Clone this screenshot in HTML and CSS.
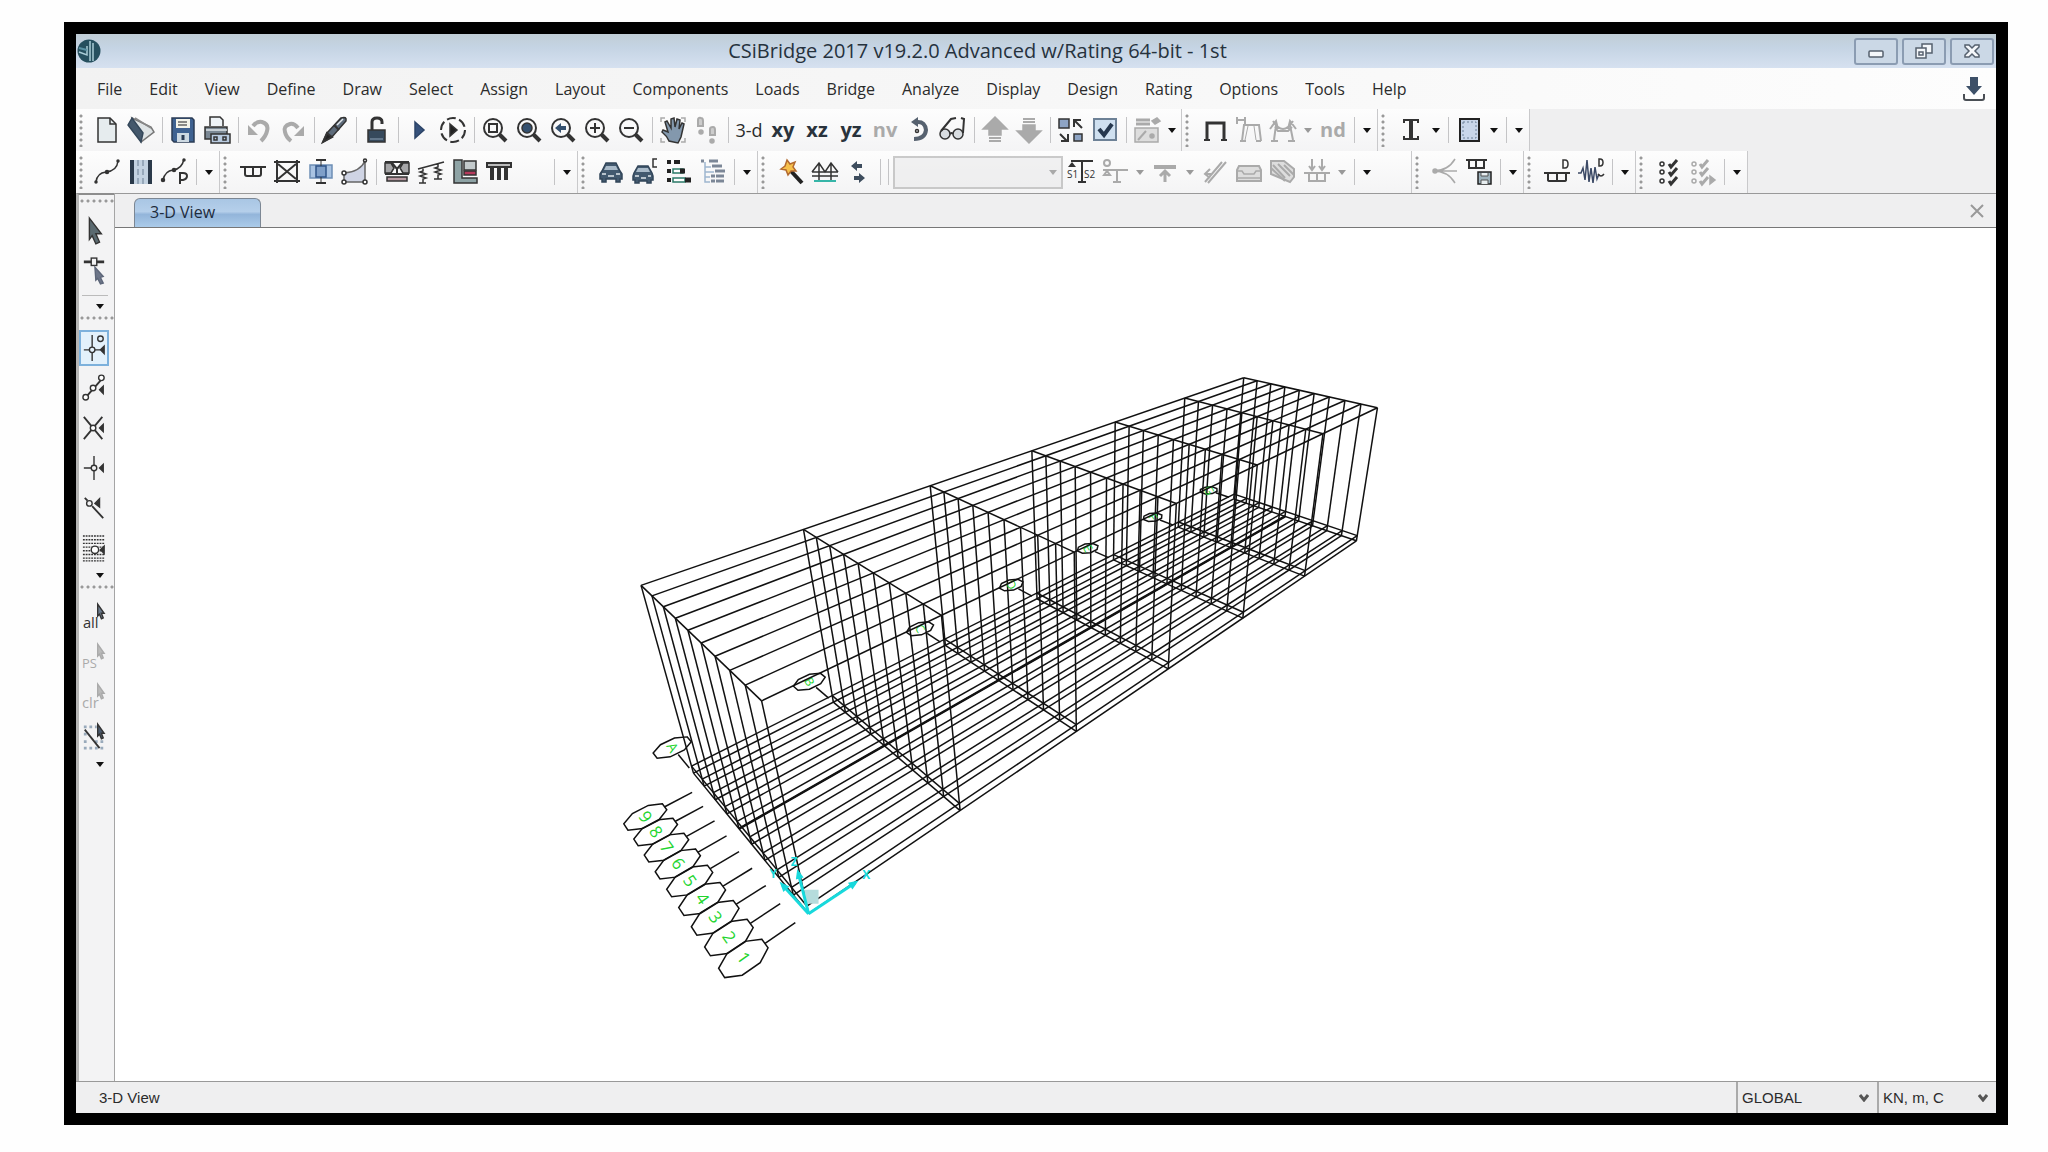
FILE: index.html
```html
<!DOCTYPE html>
<html lang="en">
<head>
	<meta charset="utf-8">
	<title>CSiBridge 2017 v19.2.0 Advanced w/Rating 64-bit - 1st</title>
	<link rel="stylesheet" href="styles.css">
</head>
<body>
<div class="window">
	<header class="titlebar">
		<svg class="app-icon" viewBox="0 0 24 24"><circle cx="12" cy="12" r="11.5" fill="#26505f"/><path d="M2 13l8 3V7M13 2v20M16 4v18" stroke="#a9ccd6" stroke-width="1.5" fill="none"/><path d="M2 9l8 2" stroke="#5b93a5" stroke-width="2"/></svg>
		<h1>CSiBridge 2017 v19.2.0 Advanced w/Rating 64-bit - 1st</h1>
		<div class="window-buttons">
			<button aria-label="Minimize"><svg viewBox="0 0 20 16"><rect x="3" y="8" width="14" height="6" rx="1"/></svg></button>
			<button aria-label="Restore"><svg viewBox="0 0 20 16"><rect x="8" y="1" width="10" height="9"/><rect x="2" y="5" width="10" height="10"/><rect x="5" y="9" width="4" height="3"/></svg></button>
			<button aria-label="Close"><svg viewBox="0 0 20 16"><path d="M3 2h4l3 3 3-3h4v2l-4 4 4 4v2h-4l-3-3-3 3H3v-2l4-4-4-4z"/></svg></button>
		</div>
	</header>

	<nav class="menubar">
		<a href="#">File</a>
		<a href="#">Edit</a>
		<a href="#">View</a>
		<a href="#">Define</a>
		<a href="#">Draw</a>
		<a href="#">Select</a>
		<a href="#">Assign</a>
		<a href="#">Layout</a>
		<a href="#">Components</a>
		<a href="#">Loads</a>
		<a href="#">Bridge</a>
		<a href="#">Analyze</a>
		<a href="#">Display</a>
		<a href="#">Design</a>
		<a href="#">Rating</a>
		<a href="#">Options</a>
		<a href="#">Tools</a>
		<a href="#">Help</a>
		<button class="download" aria-label="Download update"><svg viewBox="0 0 24 26"><path d="M8 1h8v9h4l-8 9-8-9h4z" fill="#3d5068"/><path d="M2 18v4q0 2 2 2h16q2 0 2-2v-4" fill="none" stroke="#4a4f55" stroke-width="2"/></svg></button>
	</nav>

	<div class="toolbar">
		<div class="group">
			<span class="grip"></span>
			<button class="tool" aria-label="New"><svg viewBox="0 0 26 26"><path d="M4 1h12l6 6v18H4z" fill="#e6ecee"/><path d="M16 1v6h6"/></svg></button>
			<button class="tool" aria-label="Open"><svg viewBox="0 0 26 26"><path d="M4 1l19 9 3 5-13 10z" fill="#dfe4e6" stroke="#777"/><path d="M0 8l4-7 11 15-2 9z" fill="#44586c" stroke="#34475a"/><path d="M7 1l16 10" stroke="#888"/></svg></button>
			<span class="sep"></span>
			<button class="tool" aria-label="Save"><svg viewBox="0 0 26 26"><path d="M2 1h20l2 2v22H4l-2-2z" fill="#3f6291" stroke="#2b3c55"/><path d="M6 2h14v9H6z" fill="#f4f4ea" stroke="none"/><path d="M8 5h9M8 8h9" stroke="#666"/><path d="M7 16h12v9H7z" fill="#cdd9e2" stroke="none"/><path d="M13 18v5" stroke="#2b3c55" stroke-width="3"/></svg></button>
			<button class="tool" aria-label="Print"><svg viewBox="0 0 26 26"><path d="M6 9V0h10l3 3v6" fill="#eef3f7"/><path d="M1 10h22v12H1z" fill="#7b8894"/><path d="M2 13h21" stroke="#dfe6ea"/><rect x="7" y="17" width="19" height="9" fill="#b9cbe0"/><rect x="10" y="20" width="3" height="3"/><rect x="19" y="20" width="3" height="3"/></svg></button>
			<span class="sep"></span>
			<button class="tool off" aria-label="Undo"><svg viewBox="0 0 26 26"><path d="M7 9q4-5 9-4 7 2 5 9-1 5-6 10" stroke-width="4"/><path d="M2 8v10h10z" fill="#aaa" stroke="none"/></svg></button>
			<button class="tool off" aria-label="Redo"><svg viewBox="0 0 26 26"><path d="M18 11q-4-5-8-4-7 2-5 8 1 5 6 9" stroke-width="4"/><path d="M24 9v10H14z" fill="#aaa" stroke="none"/></svg></button>
			<span class="sep"></span>
			<button class="tool" aria-label="Refresh"><svg viewBox="0 0 26 26"><path d="M1 25l4-9L19 1q6-2 5 3L10 20z" fill="#5d6b7a"/><path d="M1 25l4-9 5 4zM12 8l5 5" fill="#222" stroke-width="2"/><path d="M15 8l6-6" stroke="#e3e8ec"/></svg></button>
			<span class="sep"></span>
			<button class="tool" aria-label="Unlock model"><svg viewBox="0 0 26 26"><path d="M8 13V5q0-4 5-4t5 4v2" stroke-width="3"/><rect x="4" y="13" width="17" height="12" fill="#36495c"/><path d="M6 22h13" stroke="#72869a"/></svg></button>
			<span class="sep"></span>
			<button class="tool" aria-label="Run"><svg viewBox="0 0 26 26"><path d="M9 5l9 8-9 8z" fill="#36517b" stroke="#2c4468"/></svg></button>
			<button class="tool" aria-label="Run model alive"><svg viewBox="0 0 26 26"><circle cx="13" cy="13" r="12" stroke-width="2" stroke-dasharray="9 3.5"/><path d="M10 7l7 6-7 6z" fill="#222"/></svg></button>
			<span class="sep"></span>
			<button class="tool" aria-label="Rubber band zoom"><svg viewBox="0 0 26 26"><circle cx="11" cy="11" r="9" stroke-width="2"/><path d="M17 17l7 7" stroke-width="4"/><rect x="7" y="7" width="8" height="8" stroke-width="2"/></svg></button>
			<button class="tool" aria-label="Zoom to full"><svg viewBox="0 0 26 26"><circle cx="11" cy="11" r="9" stroke-width="2"/><path d="M17 17l7 7" stroke-width="4"/><circle cx="11" cy="11" r="5" fill="#34506f"/></svg></button>
			<button class="tool" aria-label="Previous zoom"><svg viewBox="0 0 26 26"><circle cx="11" cy="11" r="9" stroke-width="2"/><path d="M17 17l7 7" stroke-width="4"/><path d="M5 11l6-5v3h5v4h-5v3z" fill="#34506f" stroke="none"/></svg></button>
			<button class="tool" aria-label="Zoom in"><svg viewBox="0 0 26 26"><circle cx="11" cy="11" r="9" stroke-width="2"/><path d="M17 17l7 7" stroke-width="4"/><path d="M6 11h10M11 6v10" stroke-width="2"/></svg></button>
			<button class="tool" aria-label="Zoom out"><svg viewBox="0 0 26 26"><circle cx="11" cy="11" r="9" stroke-width="2"/><path d="M17 17l7 7" stroke-width="4"/><path d="M6 11h10" stroke-width="2"/></svg></button>
			<span class="sep"></span>
			<button class="tool" aria-label="Pan"><svg viewBox="0 0 26 26"><path d="M1 5V1h4M21 1h4v4M25 21v4h-4M5 25H1v-4" stroke="#aaa"/><path d="M9 24q-2-5-7-9l1-2 5 2L5 5l2-1 4 7V2l3-1 1 9 2-8 3 1-1 9 3-6 2 1-3 13-3 6z" fill="#8398ad"/></svg></button>
			<button class="tool off" aria-label="Walk"><svg viewBox="0 0 26 26"><path d="M4 9V3q0-3 3-2 2 0 2 3v5H4zM16 18v-6q0-2 3-2 2 0 2 3v5h-5z" fill="#ccc" stroke-width="2"/><circle cx="7" cy="15" r="2" fill="#aaa"/><circle cx="18" cy="24" r="2" fill="#aaa"/></svg></button>
			<span class="sep"></span>
			<button class="tool plain">3-d</button>
			<button class="tool word">xy</button>
			<button class="tool word">xz</button>
			<button class="tool word">yz</button>
			<button class="tool word off">nv</button>
			<button class="tool" aria-label="Rotate view"><svg viewBox="0 0 26 26"><path d="M10 5q9-1 10 8-1 9-12 9" stroke="#56616f" stroke-width="4"/><path d="M12 0v10L5 5z" fill="#56616f" stroke="none"/><circle cx="11" cy="14" r="1.500"/></svg></button>
			<button class="tool" aria-label="Perspective"><svg viewBox="0 0 26 26"><circle cx="5" cy="17" r="5" fill="#d9dde1"/><circle cx="18" cy="17" r="5" fill="#d9dde1"/><path d="M10 17q2-2 3 0M1 14L11 2l5-1M23 16l1-14-3-1" stroke-width="2"/></svg></button>
			<span class="sep"></span>
			<button class="tool off" aria-label="Move up"><svg viewBox="0 0 26 26"><path d="M13 0l12 12h-6v6H7v-6H1z" fill="#aaa"/><path d="M7 21h12M7 24h12" stroke-width="2"/></svg></button>
			<button class="tool off" aria-label="Move down"><svg viewBox="0 0 26 26"><path d="M13 26L1 14h6V8h12v6h6z" fill="#aaa"/><path d="M7 2h12M7 5h12" stroke-width="2"/></svg></button>
			<span class="sep"></span>
			<button class="tool" aria-label="Shrink objects"><svg viewBox="0 0 26 26"><rect x="1" y="2" width="10" height="9" fill="#8ea4c4"/><path d="M15 3h8M16 3v7M16 3l8 8" stroke-width="2"/><path d="M2 17l7 7M10 17v7H3" stroke-width="2"/><rect x="16" y="17" width="8" height="7" fill="#8ea4c4"/></svg></button>
			<button class="tool" aria-label="Display options"><svg viewBox="0 0 26 26"><rect x="2" y="2" width="22" height="21" fill="#cfe0f0" stroke="#6d8196" stroke-width="2"/><path d="M7 12l5 6 8-11" stroke-width="4" stroke="#26384e"/></svg></button>
			<span class="sep"></span>
			<button class="tool off" aria-label="Assign display"><svg viewBox="0 0 26 26"><path d="M2 3h14M2 7h14" stroke-width="3"/><path d="M1 11h23v14H1z" fill="#ddd"/><path d="M4 23l8-9" stroke-width="2"/><circle cx="18" cy="19" r="2" fill="#aaa"/><path d="M18 4l5-3 3 3-5 3z" fill="#aaa"/></svg></button>
			<button class="arrow attached" aria-label="More display"></button>
		</div>
		<div class="group">
			<span class="grip"></span>
			<button class="tool" aria-label="Frame"><svg viewBox="0 0 26 26"><path d="M5 22V6h17v16" stroke-width="3"/><path d="M2 23h6M19 23h6" stroke-width="2"/></svg></button>
			<button class="tool off" aria-label="Frame span"><svg viewBox="0 0 26 26"><path d="M1 0v7M9 0v7M1 3h8M6 24L8 8h15l2 16M4 24h6M20 24h5" stroke-width="2"/><path d="M9 23l3-14M20 23L18 9" stroke-width="1"/></svg></button>
			<button class="tool off" aria-label="Deformed shape"><svg viewBox="0 0 26 26"><path d="M3 4q10 16 20 0M5 10l3 4h10l4-4M0 12l6-8 2 8M26 12l-6-8-2 8M6 8L4 23M20 8l3 15M1 24h7M18 24h7" stroke-width="2"/></svg></button>
			<button class="arrow attached off" aria-label="More shapes"></button>
			<button class="tool word off">nd</button>
			<span class="sep"></span>
			<button class="arrow" aria-label="More views"></button>
		</div>
		<div class="group">
			<span class="grip"></span>
			<button class="tool" aria-label="Frame section"><svg viewBox="0 0 26 26"><path d="M5 3h16M5 22h16M6 3v3M20 3v3M6 22v-3M20 22v-3" stroke-width="2"/><path d="M13 3v19" stroke-width="4"/></svg></button>
			<button class="arrow attached" aria-label="More sections"></button>
			<span class="sep"></span>
			<button class="tool" aria-label="Area section"><svg viewBox="0 0 26 26"><rect x="4" y="2" width="19" height="22" fill="#c9d6ea" stroke="#222" stroke-width="2"/><path d="M7 5h13v16H7z" stroke="#6d8098" stroke-width="1" stroke-dasharray="2 2"/></svg></button>
			<button class="arrow attached" aria-label="More areas"></button>
			<span class="sep"></span>
			<button class="arrow" aria-label="Toolbar options"></button>
		</div>
	</div>

	<div class="toolbar">
		<div class="group">
			<span class="grip"></span>
			<button class="tool" aria-label="Layout line"><svg viewBox="0 0 26 26"><path d="M2 23Q3 14 12 13q11-1 12-11"/><circle cx="2" cy="23" r="1" fill="#333"/><circle cx="13" cy="13" r="1.500" fill="#333"/><circle cx="24" cy="2" r="1" fill="#333"/></svg></button>
			<button class="tool" aria-label="Lanes"><svg viewBox="0 0 26 26"><path d="M3 1h20v24H3z" fill="#c3d2e0" stroke="none"/><path d="M4 1v24M22 1v24" stroke="#2b3a4a" stroke-width="4"/><path d="M10 1v24M15 1v24" stroke="#6b7f93" stroke-width="1" stroke-dasharray="6 3"/></svg></button>
			<button class="tool" aria-label="Layout parameters"><svg viewBox="0 0 26 26"><path d="M1 21Q3 12 11 11q9-1 11-11"/><circle cx="1" cy="21" r="1.500" fill="#333"/><circle cx="12" cy="11" r="1.500" fill="#333"/><circle cx="22" cy="1" r="1" fill="#333"/><path d="M18 25V14h3q4 0 4 3t-4 4h-3" stroke-width="2"/></svg></button>
			<span class="sep"></span>
			<button class="arrow" aria-label="More layout"></button>
		</div>
		<div class="group">
			<span class="grip"></span>
			<button class="tool" aria-label="Deck section"><svg viewBox="0 0 26 26"><path d="M0 8h26M5 9v6q0 2 2 2h12q2 0 2-2V9M13 9v8" stroke-width="2"/></svg></button>
			<button class="tool" aria-label="Diaphragm"><svg viewBox="0 0 26 26"><path d="M0 3h26M0 22h26M3 1v23M23 1v23M4 5l18 15M22 5L4 20" stroke-width="2"/></svg></button>
			<button class="tool" aria-label="Hinge"><svg viewBox="0 0 26 26"><path d="M2 6h22v13H2z" fill="#a9c3e2" stroke="#6d8fb5"/><rect x="8" y="7" width="10" height="11" fill="#7f9fc8" stroke="#2f5488"/><path d="M8 1h10M8 24h10" stroke-width="2"/><path d="M13 1v6M13 18v6" stroke-width="1"/></svg></button>
			<button class="tool" aria-label="Parametric variation"><svg viewBox="0 0 26 26"><path d="M2 14q16-1 21-12v21H2z" fill="#cfd4e4" stroke="#666"/><circle cx="2" cy="14" r="2" fill="#fff"/><circle cx="23" cy="1.500" r="1.500" fill="#fff"/><circle cx="2" cy="23" r="2" fill="#fff"/><circle cx="23" cy="23" r="2" fill="#fff"/></svg></button>
			<span class="sep"></span>
			<button class="tool" aria-label="Bearing"><svg viewBox="0 0 26 26"><path d="M1 4h6l3 5-3 5H1zM25 4h-6l-3 5 3 5h6z" fill="#a6a6a8"/><path d="M1 3h24M1 15h24M8 4l5 6 5-6M13 10v5" stroke-width="2"/><rect x="3" y="18" width="20" height="4" fill="#b99aa2"/></svg></button>
			<button class="tool" aria-label="Spring supports"><svg viewBox="0 0 26 26"><path d="M0 10L26 3M5 9v3l-3 1 6 2-6 2 6 2-3 1v4M20 5v3l-3 1 6 2-6 2 6 2-3 1v4M1 24h7M16 20h8"/></svg></button>
			<button class="tool" aria-label="Abutment"><svg viewBox="0 0 26 26"><path d="M2 1h8v18h15v5H2z" fill="#8ea3a5"/><path d="M12 2h12v9H12z" fill="#c3cacc"/><path d="M12 12h12v4H12z" fill="#b73a5c"/></svg></button>
			<button class="tool" aria-label="Bent"><svg viewBox="0 0 26 26"><path d="M1 4h24v4H1z" fill="#bbb" stroke-width="2"/><path d="M6 8v13M13 8v13M20 8v13" stroke-width="4"/></svg></button>
			<span class="spacer"></span>
			<span class="sep"></span>
			<button class="arrow" aria-label="More components"></button>
		</div>
		<div class="group">
			<span class="grip"></span>
			<button class="tool" aria-label="Vehicles"><svg viewBox="0 0 26 26"><path d="M8 4h10l4 8 2 3v5h-2v3h-4v-3H8v3H4v-3H2v-5l2-3z" fill="#42596f" stroke="#32465a"/><path d="M8 7h10l2 4H6z" fill="#a9bac9" stroke="none"/><path d="M4 15h4M18 15h4M10 17h6" stroke="#dfe6ec"/></svg></button>
			<button class="tool" aria-label="Vehicle classes"><svg viewBox="0 0 26 26"><path d="M6 7h10l4 7 1 3v4h-2v3h-4v-2H7v2H3v-3H1v-4l1-3z" fill="#42596f" stroke="#32465a"/><path d="M6 9h10l2 4H4z" fill="#a9bac9" stroke="none"/><path d="M3 17h4M16 17h3M9 19h5" stroke="#dfe6ec"/><path d="M25 0h-4v8h4"/></svg></button>
			<button class="tool" aria-label="Load patterns"><svg viewBox="0 0 26 26"><path d="M1 3h4M8 3h6M1 12h4M1 21h4" stroke="#222" stroke-width="4"/><path d="M7 10h10v4H7zM7 19h12v4H7z" fill="#fff" stroke="#2b7a68"/><path d="M14 12h5M19 21h6" stroke="#222" stroke-width="5"/></svg></button>
			<button class="tool" aria-label="Load cases"><svg viewBox="0 0 26 26"><path d="M1 2h3M9 2h9M12 7h10M15 12h10M11 17h4M16 17h8M11 22h4M16 22h8" stroke="#7c8797" stroke-width="3"/><path d="M5 3v20h5M5 8h6M5 13h9M5 18h5" stroke="#9fb6d0"/></svg></button>
			<span class="sep"></span>
			<button class="arrow" aria-label="More loads"></button>
		</div>
		<div class="group">
			<span class="grip"></span>
			<button class="tool" aria-label="Bridge wizard"><svg viewBox="0 0 26 26"><path d="M12 11l12 13" stroke="#222" stroke-width="4"/><path d="M9 1l3 4 5-2-2 5 3 4-5 0-3 4-2-5-5-1 4-3z" fill="#f6c04b" stroke="#b36a2f"/></svg></button>
			<button class="tool" aria-label="Bridge object"><svg viewBox="0 0 26 26"><path d="M0 13h26M0 17h26M7 4v18M19 4v18M0 13L7 4l6 9 6-9 7 9"/><path d="M2 22h22" stroke="#36b5a8" stroke-width="2"/></svg></button>
			<button class="tool" aria-label="Update linked model"><svg viewBox="0 0 26 26"><path d="M5 7l6-5v3h5v4h-5v3zM19 19l-6-5v3H8v4h5v3z" fill="#3e4d5e" stroke="none"/></svg></button>
			<span class="sep"></span>
			<span class="sep"></span>
			<select class="object-select" aria-label="Bridge object" disabled><option></option></select>
			<button class="tool" aria-label="Spans"><svg viewBox="0 0 26 26"><path d="M3 2h22M14 2v21M10 23h8" stroke-width="2"/><path d="M0 8l4-5 4 5z" fill="#333" stroke="none"/><text x="-1" y="19" font-size="10">S1</text><text x="16" y="19" font-size="10">S2</text></svg></button>
			<button class="tool off" aria-label="Supports"><svg viewBox="0 0 26 26"><circle cx="5" cy="4" r="3" stroke-width="2"/><path d="M1 11h25M15 11v12M11 23h8M2 16l3-4 3 4z" stroke-width="2"/></svg></button>
			<button class="arrow attached off" aria-label="More supports"></button>
			<button class="tool off" aria-label="Superelevation"><svg viewBox="0 0 26 26"><path d="M2 8h22" stroke-width="4"/><path d="M13 23V12M8 17l5-5 5 5" stroke-width="3"/></svg></button>
			<button class="arrow attached off" aria-label="More elevation"></button>
			<button class="tool off" aria-label="Prestress"><svg viewBox="0 0 26 26"><path d="M3 23L20 3M6 24L24 3M3 15h6M8 10l-5 5 5 4" stroke-width="2"/></svg></button>
			<button class="tool off" aria-label="Girder rebar"><svg viewBox="0 0 26 26"><path d="M3 7h20l2 4v11H1V11z" fill="#ddd" stroke-width="2"/><path d="M1 12h5l2 3h10l2-3h5M2 19h22"/></svg></button>
			<button class="tool off" aria-label="Point loads"><svg viewBox="0 0 26 26"><path d="M1 2h13l10 8v8l-4 5L1 15z" fill="#ddd" stroke-width="2"/><path d="M3 6l12 13M8 5l12 12M14 6l10 10M1 9l14 13" stroke-width="2"/></svg></button>
			<button class="tool off" aria-label="Line loads"><svg viewBox="0 0 26 26"><path d="M8 0v10M18 0v10M5 7l3 4 3-4M15 7l3 4 3-4M0 14h26M5 15v7h16v-7M13 15v7" stroke-width="2"/></svg></button>
			<button class="arrow attached off" aria-label="More line loads"></button>
			<span class="sep"></span>
			<button class="arrow" aria-label="More bridge"></button>
			<span class="spacer"></span>
		</div>
		<div class="group">
			<span class="grip"></span>
			<button class="tool off" aria-label="Influence lines"><svg viewBox="0 0 26 26"><path d="M1 12h24M1 12Q16 12 23 0M1 12Q16 12 23 24"/><circle cx="3" cy="12" r="2" fill="#aaa"/></svg></button>
			<button class="tool" aria-label="Save bridge forces"><svg viewBox="0 0 26 26"><path d="M0 1h21M3 2v7h15V2M10 2v7" stroke-width="2"/><rect x="12" y="13" width="13" height="12" fill="#9fb3bd" stroke="#222"/><path d="M15 14v3h7v-3M15 25v-4h7v4" fill="#e8eef0" stroke="#555" stroke-width="1"/></svg></button>
			<span class="sep"></span>
			<button class="arrow" aria-label="More analysis"></button>
		</div>
		<div class="group">
			<span class="grip"></span>
			<button class="tool" aria-label="Deck design"><svg viewBox="0 0 26 26"><path d="M0 14h26M4 15v6q0 1 2 1h14q2 0 2-1v-6M13 15v7" stroke-width="2"/><path d="M19 1v8h2q3 0 3-4t-3-4z"/></svg></button>
			<button class="tool" aria-label="Seismic design"><svg viewBox="0 0 26 26"><path d="M0 14h3l2-5 2 12L9 1l2 22 2-14 2 15 2-16 2 12 2-5" stroke="#3c4a66"/><path d="M21 0v7h1q3 0 3-3.500t-3-3.500zM20 15q3 4 6 0"/></svg></button>
			<span class="sep"></span>
			<button class="arrow" aria-label="More design"></button>
		</div>
		<div class="group">
			<span class="grip"></span>
			<button class="tool" aria-label="Load rating"><svg viewBox="0 0 26 26"><circle cx="6" cy="5" r="2"/><circle cx="6" cy="13" r="2"/><circle cx="6" cy="22" r="2"/><path d="M13 5l2 3 6-7M13 13l2 3 6-7M13 22l2 3 6-7" stroke-width="3"/></svg></button>
			<button class="tool off" aria-label="Run load rating"><svg viewBox="0 0 26 26"><circle cx="4" cy="5" r="2"/><circle cx="4" cy="13" r="2"/><circle cx="4" cy="22" r="2"/><path d="M10 5l2 3 6-7M10 13l2 3 6-7M10 22l2 3 6-7" stroke-width="3"/><path d="M20 17l5 4-5 4z" fill="#aaa"/></svg></button>
			<span class="sep"></span>
			<button class="arrow" aria-label="More rating"></button>
		</div>
	</div>

	<div class="workspace">
		<aside class="sidebar">
			<span class="grip"></span>
			<button class="tool" aria-label="Select"><svg viewBox="0 0 26 30"><path d="M8 1l13 17-6 0 4 9-4 2-4-9-3 4z" fill="#5b6a70"/></svg></button>
			<button class="tool" aria-label="Reshape"><svg viewBox="0 0 26 30"><path d="M2 5h8M16 5h8" stroke-width="3"/><rect x="10" y="1" width="6" height="8"/><path d="M14 11l9 10-3 1 3 6-3 1-3-6-2 2z" fill="#6d7689" stroke="#5d6679"/></svg></button>
			<span class="rule"></span>
			<button class="arrow" aria-label="More pointers"></button>
			<span class="grip"></span>
			<button class="tool active" aria-label="Snap to points"><svg viewBox="0 0 26 30"><path d="M11 1v13M11 20v9M2 17h6M14 17h6"/><circle cx="11" cy="17" r="3"/><circle cx="20" cy="5" r="3"/><path d="M24 13v8l-4-4z" fill="#333"/></svg></button>
			<button class="tool" aria-label="Snap to midpoints"><svg viewBox="0 0 26 30"><path d="M5 24l15-17" stroke-width="2"/><circle cx="4" cy="25" r="3" fill="#fff"/><circle cx="12" cy="15" r="3" fill="#fff"/><circle cx="21" cy="4" r="3" fill="#fff"/><path d="M23 13v8l-4-4z" fill="#333"/></svg></button>
			<button class="tool" aria-label="Snap to intersections"><svg viewBox="0 0 26 30"><path d="M2 3l20 24M22 3L2 27" stroke-width="2"/><circle cx="12" cy="15" r="3" fill="#fff"/><path d="M23 11v8l-4-4z" fill="#333"/></svg></button>
			<button class="tool" aria-label="Snap to perpendicular"><svg viewBox="0 0 26 30"><path d="M13 2v10M13 18v10M2 15h8"/><circle cx="13" cy="15" r="3"/><path d="M23 11v8l-4-4z" fill="#333"/></svg></button>
			<button class="tool" aria-label="Snap to lines"><svg viewBox="0 0 26 30"><path d="M11 13l12 13M3 4l3 3" stroke-width="2"/><circle cx="8" cy="10" r="3"/><path d="M19 5v9l-5-4z" fill="#333"/></svg></button>
			<button class="tool" aria-label="Snap to fine grid"><svg viewBox="0 0 26 30"><path d="M1 2h23M1 6h23M1 10h23M1 14h23M1 18h23M1 22h23M1 26h23M1 29h23" stroke-dasharray="2 1"/><circle cx="14" cy="17" r="4" fill="#fff"/><path d="M24 13v8l-4-4z" fill="#333"/></svg></button>
			<button class="arrow" aria-label="More snaps"></button>
			<span class="grip"></span>
			<button class="tool" aria-label="Select all"><svg viewBox="0 0 26 30"><text x="1" y="27" font-size="16">all</text><path d="M17 1l7 10h-3l2 5-2 1-2-5-2 2z" fill="#6d7c8e"/></svg></button>
			<button class="tool off" aria-label="Previous selection"><svg viewBox="0 0 26 30"><text x="0" y="27" font-size="14">PS</text><path d="M17 1l7 10h-3l2 5-2 1-2-5-2 2z" fill="#bbb"/></svg></button>
			<button class="tool off" aria-label="Clear selection"><svg viewBox="0 0 26 30"><text x="0" y="27" font-size="16">clr</text><path d="M17 1l7 10h-3l2 5-2 1-2-5-2 2z" fill="#bbb"/></svg></button>
			<button class="tool" aria-label="Intersecting line select"><svg viewBox="0 0 26 30"><path d="M2 4h14M2 12h6M14 20h10M2 20h5M2 27h22" stroke="#9ab" stroke-width="3" stroke-dasharray="3 3"/><path d="M3 7l16 20" stroke-width="2"/><path d="M17 1l7 10h-3l2 5-2 1-2-5-2 2z" fill="#4c5b6e"/></svg></button>
			<button class="arrow" aria-label="More selection"></button>
		</aside>
		<main class="document">
			<div class="tabs">
				<button class="tab">3-D View</button>
				<button class="close" aria-label="Close view"><svg viewBox="0 0 14 14"><path d="M1 1l12 12M13 1L1 13"/></svg></button>
			</div>
			<svg id="model" class="model" viewBox="0 0 1883 853"></svg>
		</main>
	</div>

	<footer class="statusbar">
		<span class="status">3-D View</span>
		<select class="csys" aria-label="Coordinate system"><option>GLOBAL</option></select>
		<select class="units" aria-label="Units"><option>KN, m, C</option></select>
	</footer>
</div>
<script src="model.js"></script>
</body>
</html>
```
FILE: styles.css
```css
html, body{
	margin:0;
	padding:0;
	height:100%;
}
body{
	box-sizing:border-box;
	padding:22px 40px 27px 64px;
	background:#fefefe;
	font-family:"Open Sans", "Noto Sans", sans-serif;
	color:#2b2b2b;
}
button, select{
	font:inherit;
	color:inherit;
	margin:0;
	padding:0;
	border:0;
	background:none;
}
.window{
	box-sizing:border-box;
	min-height:100%;
	display:flex;
	flex-direction:column;
	border:12px solid #000;
	background:#efeff0;
}

.titlebar{
	display:flex;
	align-items:center;
	height:34px;
	padding:0 2px 0 1px;
	background:linear-gradient(#c0cdd6, #c5d4e4 40%, #d6e1f0);
}
.app-icon{
	width:24px;
	height:24px;
}
.titlebar h1{
	flex:1;
	margin:0;
	text-align:center;
	font-size:20px;
	font-weight:normal;
	line-height:34px;
	color:#26323d;
}
.window-buttons{
	display:flex;
	gap:4px;
}
.window-buttons button{
	box-sizing:border-box;
	width:44px;
	height:27px;
	border:2px solid #8b9cb2;
	border-radius:3px;
	background:#cbd8e6;
}
.window-buttons svg{
	display:block;
	width:20px;
	height:16px;
	margin:auto;
	fill:#f4f7fa;
	stroke:#55606e;
	stroke-width:1.5;
}

.menubar{
	display:flex;
	align-items:center;
	gap:27px;
	height:41px;
	padding:0 10px 0 21px;
	background:linear-gradient(90deg, #f2f2f2, #f8f8f8 60%, #fdfdfd);
	font-size:16px;
}
.menubar a{
	color:#2b2b2b;
	text-decoration:none;
}
.download{
	margin-left:auto;
}
.download svg{
	display:block;
	width:24px;
	height:26px;
}

.toolbar{
	display:flex;
	height:42px;
}
.group{
	display:flex;
	align-items:center;
	padding-right:1px;
	border-right:1px solid #c9c9cb;
	background:linear-gradient(#fdfdfd, #f4f4f5);
}
.grip{
	width:16px;
	height:34px;
	background:radial-gradient(circle at 5px 3px, #999 1px, transparent 2px) 0 0/16px 6px repeat-y;
}
.group:first-child .grip{
	width:14px;
}
.sep{
	width:1px;
	height:26px;
	margin:0 3px 0 4px;
	background:#c4c4c6;
}
.spacer{
	width:34px;
}
.tool{
	flex:none;
	width:34px;
	height:34px;
	text-align:center;
}
.tool svg{
	display:block;
	width:26px;
	height:26px;
	margin:auto;
	fill:none;
	stroke:#333;
	stroke-width:1.5;
	overflow:visible;
}
.tool.off svg{
	stroke:#aaa;
}
.tool svg text{
	fill:#333;
	stroke:none;
}
.tool.off svg text{
	fill:#aaa;
}
.plain{
	font-size:18px;
	line-height:28px;
}
.word{
	font-size:20px;
	font-weight:bold;
	line-height:28px;
	color:#29333c;
}
.word.off{
	color:#aaa;
}
.arrow{
	flex:none;
	width:18px;
	height:14px;
}
.arrow:before{
	content:'';
	display:block;
	width:0;
	margin:auto;
	border:4px solid transparent;
	border-top:5px solid #111;
	border-bottom:0;
}
.arrow.attached{
	width:16px;
}
.arrow.off:before{
	border-top-color:#999;
}

select{
	appearance:none;
	box-sizing:border-box;
	background:no-repeat right 8px center;
}
.object-select{
	width:170px;
	height:33px;
	margin:0 1px;
	border:2px solid #b5b5b5;
	background-color:#ececed;
	background-position:right 4px center;
	background-image:url("data:image/svg+xml,%3Csvg xmlns='http://www.w3.org/2000/svg' width='8' height='5'%3E%3Cpath d='M0 0h8L4 5z' fill='%23888'/%3E%3C/svg%3E");
}

.workspace{
	flex:1;
	display:flex;
}
.sidebar{
	box-sizing:border-box;
	width:38px;
	padding-top:1px;
	display:flex;
	flex-direction:column;
	border-top:2px solid #8d8d8d;
	border-left:3px solid #b5b5b5;
	background:#f3f3f4;
}
.sidebar .grip{
	width:auto;
	height:15px;
	background:radial-gradient(circle at 3px 5px, #999 1px, transparent 2px) 0 0/6px 15px repeat-x;
}
.sidebar .tool{
	box-sizing:border-box;
	width:30px;
	height:40px;
}
.sidebar .tool svg{
	width:24px;
	height:28px;
}
.sidebar .active{
	height:36px;
	margin:2px 0;
	border:2px solid #7db1dc;
	background:#e3f1fb;
}
.sidebar .arrow{
	align-self:flex-end;
	width:28px;
}
.rule{
	height:1px;
	margin:4px 6px 3px 3px;
	background:#bbb;
}
.document{
	flex:1;
	min-width:0;
	display:flex;
	flex-direction:column;
	border-left:1px solid #a5a5a5;
	background:#fff;
}
.tabs{
	display:flex;
	justify-content:space-between;
	align-items:flex-end;
	height:33px;
	padding:0 12px 0 19px;
	border-top:1px solid #999;
	border-bottom:1px solid #777;
	background:#efeff0;
}
.tab{
	box-sizing:border-box;
	width:127px;
	height:29px;
	padding-left:15px;
	padding-bottom:3px;
	text-align:left;
	line-height:22px;
	border:1px solid #7c8794;
	border-bottom:0;
	border-radius:6px 6px 0 0;
	background:linear-gradient(#a9c6e4, #b5cfea 45%, #93b5da 55%, #abcbe9);
	color:#1e2c3d;
	font-size:16px;
}
.close{
	align-self:center;
}
.close svg{
	display:block;
	width:14px;
	height:14px;
	stroke:#999;
	stroke-width:2;
}
.model{
	display:block;
	width:100%;
	flex:1;
	min-height:0;
	fill:none;
	stroke:#111;
	stroke-width:1.5;
}
.model .lane{
	stroke-width:2.5;
}
.model .label{
	fill:#1fd52f;
	stroke:none;
	text-anchor:middle;
}
.model .axis{
	stroke:#17d9dc;
	stroke-width:3;
}
.model .axis-head{
	fill:#17d9dc;
	stroke:none;
}
.model .axis-name{
	fill:#17d9dc;
	stroke:none;
	font-size:12px;
	font-weight:bold;
	text-anchor:middle;
}
.model .origin{
	fill:#b5dcdc;
	stroke:none;
}

.statusbar{
	display:flex;
	align-items:center;
	height:31px;
	padding-left:23px;
	border-top:1px solid #999;
	font-family:"Liberation Sans", sans-serif;
	font-size:15px;
}
.status{
	flex:1;
}
.statusbar select{
	height:31px;
	padding-left:4px;
	border-left:2px solid #aaa;
	background-color:#ececed;
	background-image:url("data:image/svg+xml,%3Csvg xmlns='http://www.w3.org/2000/svg' width='10' height='8'%3E%3Cpath d='M1 1l4 5 4-5' fill='none' stroke='%23555' stroke-width='3'/%3E%3C/svg%3E");
}
.csys{
	width:141px;
}
.units{
	width:119px;
}
```
FILE: model.js
```js
var svg = document.getElementById('model');
var STATIONS = 7;
var GIRDERS = 10;
var LEVELS = [0, 0.042, 1];

// perspective projection: u along the bridge, v across it, z up
function project(u, v, z){
	var w = 1 + 0.152 * u + 0.02456 * v - 0.1415 * z;
	var x = 694.3 + 280.3 * u + 1.42 * v - 138.6 * z;
	var y = 686 - 14.7 * u - 2.25 * v - 280 * z;
	return [x / w, y / w];
}

function add(tag, attrs, text){
	var el = document.createElementNS('http://www.w3.org/2000/svg', tag);
	for(var key in attrs){
		el.setAttribute(key, attrs[key]);
	}
	if(text){
		el.textContent = text;
	}
	svg.appendChild(el);
}

function line(a, b, className){
	add('path', {d: 'M' + a.join(' ') + 'L' + b.join(' '), 'class': className || 'grid'});
}

function bubble(u, v, text, size, angle){
	var points = [];
	for(var i=0; i<8; i++){
		var t = (i + 0.5) * Math.PI / 4;
		points.push(project(u + 0.12 * Math.cos(t), v + 0.55 * Math.sin(t), 0).join(','));
	}
	add('polygon', {points: points.join(' ')});
	var c = project(u, v, 0);
	add('text', {
		'class': 'label',
		'font-size': size,
		transform: 'translate(' + c.join(' ') + ') rotate(' + angle + ')',
		dy: '0.35em'
	}, text);
}

// small triangle at the end of an axis, pointing away from the origin
function arrowHead(from, to){
	var a = Math.atan2(to[1] - from[1], to[0] - from[0]) * 180 / Math.PI;
	add('path', {
		'class': 'axis-head',
		d: 'M-6 -4L4 0L-6 4z',
		transform: 'translate(' + to.join(' ') + ') rotate(' + a + ')'
	});
}

for(var u=0; u<STATIONS; u++){
	LEVELS.forEach(function(z){
		line(project(u, 0, z), project(u, GIRDERS - 1, z));
	});
	for(var v=0; v<GIRDERS; v++){
		line(project(u, v, 0), project(u, v, 1));
	}
	line(project(u, 9.4, 0), project(u, 10.5, 0));
	bubble(u, 11.1, 'ABCDEFG'[u], u ? 12 : 14, 60);
}
for(var v=0; v<GIRDERS; v++){
	LEVELS.forEach(function(z){
		line(project(0, v, z), project(STATIONS - 1, v, z));
	});
}
// reference line of the lane
line(project(0, 5, 0), project(STATIONS - 1, 5, 0), 'lane');
for(var v=0; v<GIRDERS-1; v++){
	line(project(-0.075, v, 0), project(-0.24, v, 0));
	bubble(-0.352, v, String(v + 1), 17, 55);
}

// global axes
var o = project(0, 0, 0);
add('rect', {'class': 'origin', x: o[0] - 4, y: o[1] - 24, width: 14, height: 14});
[[741, 655], [684, 645], [668, 657]].forEach(function(end){
	line(o, end, 'axis');
	arrowHead(o, end);
});
add('text', {'class': 'axis-name', x: 752, y: 651}, 'X');
add('text', {'class': 'axis-name', x: 680, y: 638}, 'Z');
add('text', {'class': 'axis-name', x: 659, y: 650}, 'Y');
```
